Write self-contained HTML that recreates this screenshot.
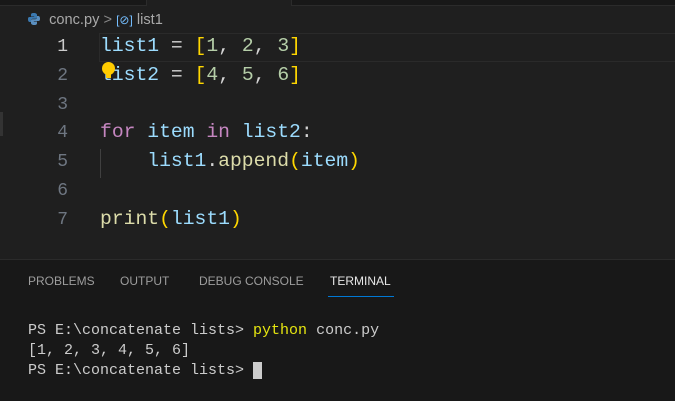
<!DOCTYPE html>
<html><head><style>
body{margin:0;width:675px;height:400px;background:#1f1f1f;overflow:hidden;position:relative;font-family:"Liberation Sans",sans-serif}
.top{position:absolute;left:0;top:0;width:675px;height:5px;background:#181818;border-bottom:1px solid #2b2b2b}
.top .t{position:absolute;left:146px;top:0;width:144px;height:6px;background:#1f1f1f;border-left:1px solid #2b2b2b;border-right:1px solid #2b2b2b}
.bc{position:absolute;top:10px;left:27px;font-size:14.6px;color:#a9a9a9;line-height:20px}
.code{position:absolute;left:0;top:35px;font-family:"Liberation Mono",monospace;font-size:19.7px}
.ln{position:absolute;width:68px;text-align:right;color:#6e7681;font-size:18px}
.l{position:absolute;left:100px;white-space:pre;color:#9cdcfe}
.cur{position:absolute;left:99px;top:33px;width:576px;height:27px;border:1px solid #2a2a2a}
.y{color:#ffd700}.n{color:#b5cea8}.w{color:#d4d4d4}.k{color:#c586c0}.f{color:#dcdcaa}
.panel{position:absolute;left:0;top:259px;width:675px;height:141px;background:#181818;border-top:1px solid #2b2b2b}
.tabs{position:absolute;top:14px;font-size:12px;color:#9d9d9d}
.tabs span{position:absolute;white-space:nowrap}
.term{position:absolute;left:28px;top:61px;font-family:"Liberation Mono",monospace;font-size:15px;line-height:20px;color:#cccccc;white-space:pre}
</style></head><body>
<div class="top"><div class="t"></div></div>
<div class="bc"><svg width="14" height="14" viewBox="0 0 14 14" style="vertical-align:-2px"><path d="M7 1C4 1 4 2 4 3v1.5h3.2V5H2.5C1 5 1 6.5 1 7.5S1.5 10 2.5 10H4V8.5c0-1 .8-1.8 1.8-1.8h3C9.5 6.7 10 6 10 5.3V3c0-1-1-2-3-2z" fill="#3b79b0"/><path d="M7 13c3 0 3-1 3-2V9.5H6.8V9h4.7c1.5 0 1.5-1.5 1.5-2.5S12.5 4 11.5 4H10v1.5c0 1-.8 1.8-1.8 1.8h-3C4.5 7.3 4 8 4 8.7V11c0 1 1 2 3 2z" fill="#5a8fbf"/></svg>&nbsp; conc.py <span style="color:#888">&gt;</span> <span style="color:#75beff;font-size:12px">[⊘]</span> list1</div>
<div class="cur"></div>
<div class="code">
<div class="ln" style="top:2px;color:#ccc">1</div><div class="l" style="top:0">list1 <span class="w">=</span> <span class="y">[</span><span class="n">1</span><span class="w">,</span> <span class="n">2</span><span class="w">,</span> <span class="n">3</span><span class="y">]</span></div>
<div class="ln" style="top:31px">2</div><div class="l" style="top:29px">list2 <span class="w">=</span> <span class="y">[</span><span class="n">4</span><span class="w">,</span> <span class="n">5</span><span class="w">,</span> <span class="n">6</span><span class="y">]</span></div>
<div class="ln" style="top:60px">3</div>
<div class="ln" style="top:88px">4</div><div class="l" style="top:86px"><span class="k">for</span> item <span class="k">in</span> list2<span class="w">:</span></div>
<div class="ln" style="top:117px">5</div><div class="l" style="top:115px">    list1<span class="w">.</span><span class="f">append</span><span class="y">(</span>item<span class="y">)</span></div>
<div class="ln" style="top:146px">6</div>
<div class="ln" style="top:175px">7</div><div class="l" style="top:173px"><span class="f">print</span><span class="y">(</span>list1<span class="y">)</span></div>
</div>
<div style="position:absolute;left:100px;top:149px;width:1px;height:29px;background:#404040"></div>
<div style="position:absolute;left:102px;top:62px;width:13px;height:13px;border-radius:50%;background:#ffcc00"></div>
<div style="position:absolute;left:106px;top:73px;width:5px;height:5px;background:#ffcc00"></div>
<div style="position:absolute;left:0;top:112px;width:3px;height:24px;background:#333"></div>
<div class="panel">
<div class="tabs"><span style="left:28px">PROBLEMS</span><span style="left:120px">OUTPUT</span><span style="left:199px">DEBUG CONSOLE</span><span style="left:330px;color:#e7e7e7">TERMINAL</span></div>
<div style="position:absolute;left:328px;top:36px;width:66px;height:1px;background:#0078d4"></div>
<div class="term">PS E:\concatenate lists&gt; <span style="color:#e5e510">python</span> conc.py
[1, 2, 3, 4, 5, 6]
PS E:\concatenate lists&gt; <span style="background:#ccc">&nbsp;</span></div>
</div>
</body></html>
